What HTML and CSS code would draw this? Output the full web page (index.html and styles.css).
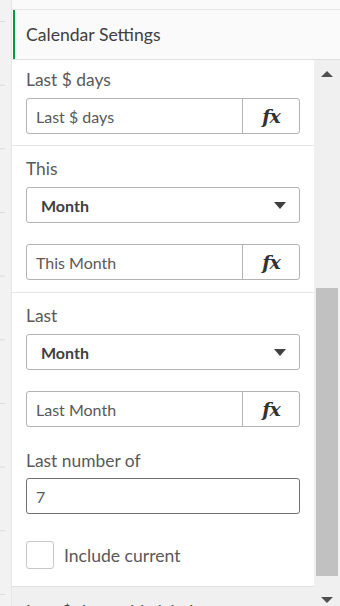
FILE: index.html
```html
<!DOCTYPE html>
<html>
<head>
  <title>Calendar Settings</title>
  <link rel="stylesheet" href="styles.css">
</head>
<body>
  <div class="rail"></div>
  <div class="panel">
    <div class="top-strip"></div>
    <div class="header">
      <span class="header-title">Calendar Settings</span>
    </div>

    <div class="main">
      <div class="scroller">
        <div class="settings">
          <section class="section first">
            <div class="label">Last $ days</div>
            <div class="field expr">
              <span class="field-text">Last $ days</span>
              <span class="fx">fx</span>
            </div>
          </section>

          <section class="section">
            <div class="label">This</div>
            <div class="field select">
              <span class="select-value">Month</span>
              <span class="caret"></span>
            </div>
            <div class="field expr">
              <span class="field-text">This Month</span>
              <span class="fx">fx</span>
            </div>
          </section>

          <section class="section last">
            <div class="label">Last</div>
            <div class="field select">
              <span class="select-value">Month</span>
              <span class="caret"></span>
            </div>
            <div class="field expr">
              <span class="field-text">Last Month</span>
              <span class="fx">fx</span>
            </div>

            <div class="label spaced">Last number of</div>
            <div class="field num">
              <span class="field-text">7</span>
            </div>

            <div class="check-row">
              <span class="checkbox"></span>
              <span class="check-label">Include current</span>
            </div>
          </section>
        </div>

        <div class="next-header">Last $ days table labels</div>
      </div>

      <div class="scrollbar">
        <span class="arrow-up"></span>
        <div class="track">
          <div class="thumb"></div>
        </div>
        <span class="arrow-down"></span>
      </div>
    </div>
  </div>
</body>
</html>
```

FILE: styles.css
```css
body {
  margin: 0;
  width: 340px;
  height: 606px;
  display: flex;
  overflow: hidden;
  background: #f2f2f2;
  font-family: Lato, 'Open Sans', sans-serif;
  color: #595959;
}

.rail {
  width: 11px;
  flex-shrink: 0;
  border-right: 1px solid #e6e6e6;
  background-image: linear-gradient(to bottom, #dadada 0, #dadada 1px, transparent 1px);
  background-size: 5px 63.67px;
  background-position: 0 21px;
  background-repeat: repeat-y;
}

.panel {
  flex: 1;
  min-width: 0;
  display: flex;
  flex-direction: column;
}

.top-strip {
  height: 9px;
  background: #fafafa;
  border-bottom: 1px solid #e6e6e6;
}

.header {
  height: 49px;
  display: flex;
  align-items: center;
  background: #fafafa;
  border-bottom: 1px solid #e0e0e0;
}

.header::before {
  content: '';
  align-self: stretch;
  width: 2px;
  margin-left: 1px;
  background: #009845;
}

.header-title {
  margin-left: 11px;
  font-size: 17.6px;
  color: #404040;
}

.main {
  flex: 1;
  min-height: 0;
  display: flex;
}

.scroller {
  flex: 1;
  min-width: 0;
  display: flex;
  flex-direction: column;
  overflow: hidden;
}

.settings {
  background: white;
  border-bottom: 1px solid #e0e0e0;
}

.section {
  padding: 13px 14px 12px;
  border-bottom: 1px solid #e6e6e6;
}

.section.first {
  padding-top: 10px;
  padding-bottom: 11px;
}

.section.last {
  border-bottom: none;
  padding-bottom: 17px;
}

.label {
  font-size: 17.4px;
  line-height: 20px;
  margin-bottom: 8px;
}

.label.spaced {
  margin-top: 24px;
  margin-bottom: 7px;
}

.field {
  height: 36px;
  box-sizing: border-box;
  display: flex;
  align-items: center;
  border: 1px solid #b3b3b3;
  border-radius: 3px;
  background: white;
}

.field + .field {
  margin-top: 21px;
}

.field-text {
  flex: 1;
  padding-left: 9px;
  font-size: 16px;
}

.fx {
  align-self: stretch;
  width: 56px;
  display: flex;
  align-items: center;
  justify-content: center;
  border-left: 1px solid #b3b3b3;
  font-family: 'DejaVu Serif', 'Liberation Serif', serif;
  font-style: italic;
  font-weight: bold;
  font-size: 19px;
  letter-spacing: -1px;
  color: #333;
}

.select {
  justify-content: space-between;
  padding: 0 13px 0 14px;
}

.select-value {
  font-size: 16px;
  font-weight: bold;
  color: #404040;
}

.caret {
  width: 0;
  height: 0;
  border-left: 6px solid transparent;
  border-right: 6px solid transparent;
  border-top: 7px solid #404040;
}

.field.num {
  border-color: #707070;
}

.check-row {
  display: flex;
  align-items: center;
  gap: 10px;
  margin-top: 27px;
}

.checkbox {
  width: 28px;
  height: 28px;
  box-sizing: border-box;
  border: 1px solid #c8c8c8;
  border-radius: 3px;
}

.check-label {
  font-size: 17.6px;
}

.next-header {
  flex: 1;
  padding: 15px 14px 0;
  background: #f0f0f0;
  font-size: 17.4px;
  line-height: 20px;
  color: #404040;
  white-space: nowrap;
}

/* fake scrollbar */
.scrollbar {
  width: 26px;
  flex-shrink: 0;
  display: flex;
  flex-direction: column;
  align-items: center;
  background: #f0f0f0;
}

.arrow-up {
  margin-top: 11px;
  border-left: 6px solid transparent;
  border-right: 6px solid transparent;
  border-bottom: 6px solid #505050;
}

.track {
  flex: 1;
  width: 100%;
  box-sizing: border-box;
  padding: 211px 2px 21px;
}

.thumb {
  height: 288px;
  background: #c1c1c1;
}

.arrow-down {
  margin-bottom: 3px;
  border-left: 6px solid transparent;
  border-right: 6px solid transparent;
  border-top: 6px solid #505050;
}
```
